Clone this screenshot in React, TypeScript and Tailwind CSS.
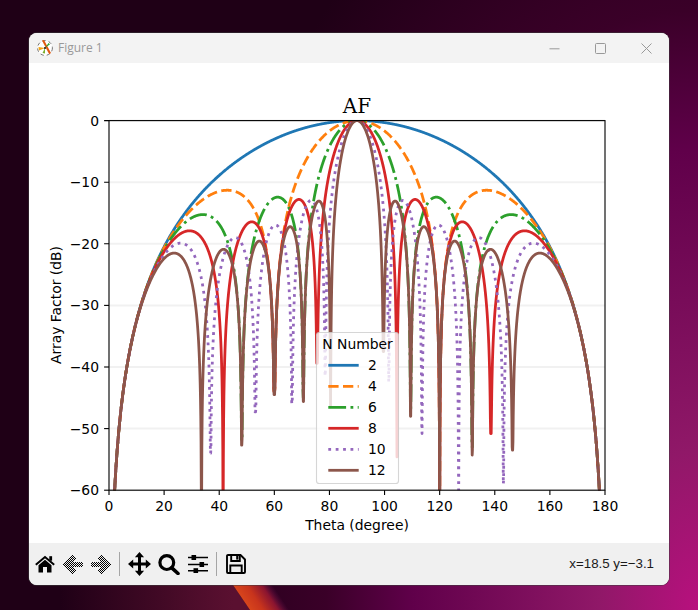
const AX = { left: 80, right: 576, top: 57.6, bottom: 427.2 };

const xPos = (t: number) => AX.left + (t / 180) * (AX.right - AX.left);
const yPos = (db: number) => AX.top + (-db / 60) * (AX.bottom - AX.top);

// sampling in the original leaves each null at its own depth, read off the plot
const series = [
  { n: 2, color: '#1f77b4', dash: undefined, floors: [] as number[][] },
  { n: 4, color: '#ff7f0e', dash: '10.3 4.4', floors: [[60, -44], [120, -70]] },
  { n: 6, color: '#2ca02c', dash: '17.8 4.4 2.8 4.4', floors: [[70.53, -45], [48.19, -52], [109.47, -47], [131.81, -53]] },
  { n: 8, color: '#d62728', dash: undefined, floors: [[75.52, -39.4], [60, -44], [41.41, -70], [104.48, -54.6], [120, -70], [138.59, -50.8]] },
  { n: 10, color: '#9467bd', dash: '2.8 4.6', floors: [[78.46, -41.5], [66.42, -46], [53.13, -47.3], [36.87, -54], [101.54, -42.4], [113.58, -50.8], [126.87, -70], [143.13, -59]] },
  { n: 12, color: '#8c564b', dash: undefined, floors: [[80.41, -46.5], [70.53, -45.6], [60, -44.5], [48.19, -52.7], [33.56, -70], [99.59, -37.5], [109.47, -48], [120, -70], [131.81, -54.3], [146.44, -53.5]] },
];

function arrayFactor(n: number, theta: number) {
  const psi = Math.PI * Math.cos((theta * Math.PI) / 180);
  const s = Math.sin(psi / 2);
  if (Math.abs(s) < 1e-9) return 1;
  return Math.abs(Math.sin((n * psi) / 2) / (n * s));
}

function curvePath(n: number, floors: number[][]) {
  let d = '';
  for (let i = 0; i <= 1800; i++) {
    const theta = i / 10;
    let db = 20 * Math.log10(Math.max(arrayFactor(n, theta), 1e-6));
    let floor = -70;
    for (const [t, f] of floors) {
      if (Math.abs(t - theta) < 3) floor = f;
    }
    db = Math.max(db, floor);
    d += `${i === 0 ? 'M' : 'L'}${xPos(theta).toFixed(2)} ${yPos(db).toFixed(2)}`;
  }
  return d;
}

function Plot() {
  const xTicks = [0, 20, 40, 60, 80, 100, 120, 140, 160, 180];
  const yTicks = [0, -10, -20, -30, -40, -50, -60];
  return (
    <svg width="640" height="480" viewBox="0 0 640 480" className="block font-['DejaVu_Sans',sans-serif] text-[13.9px]">
      <defs>
        <clipPath id="axes-clip">
          <rect x={AX.left} y={AX.top} width={AX.right - AX.left} height={AX.bottom - AX.top} />
        </clipPath>
      </defs>

      {/* grid */}
      {yTicks.map(v => (
        <line key={v} x1={AX.left} x2={AX.right} y1={yPos(v)} y2={yPos(v)} stroke="#b0b0b0" strokeOpacity="0.18" strokeWidth="2" />
      ))}

      {/* curves */}
      <g clipPath="url(#axes-clip)" fill="none" strokeWidth="2.78" strokeLinejoin="round">
        {series.map(s => (
          <path key={s.n} d={curvePath(s.n, s.floors)} stroke={s.color} strokeDasharray={s.dash} />
        ))}
      </g>

      {/* spines and ticks */}
      <rect x={AX.left} y={AX.top} width={AX.right - AX.left} height={AX.bottom - AX.top} fill="none" stroke="#000" strokeWidth="1.11" />
      {xTicks.map(v => (
        <g key={v}>
          <line x1={xPos(v)} x2={xPos(v)} y1={AX.bottom} y2={AX.bottom + 4.9} stroke="#000" strokeWidth="1.11" />
          <text x={xPos(v)} y="448" textAnchor="middle">{v}</text>
        </g>
      ))}
      {yTicks.map(v => (
        <g key={v}>
          <line x1={AX.left - 4.9} x2={AX.left} y1={yPos(v)} y2={yPos(v)} stroke="#000" strokeWidth="1.11" />
          <text x="70" y={yPos(v) + 5} textAnchor="end">{v === 0 ? '0' : `\u2212${-v}`}</text>
        </g>
      ))}

      {/* labels */}
      <text x="328" y="50" textAnchor="middle" className="font-['DejaVu_Serif',serif] text-[20px]">AF</text>
      <text x="328" y="467" textAnchor="middle">Theta (degree)</text>
      <text x="31.5" y="242" textAnchor="middle" transform="rotate(-90 31.5 242)">Array Factor (dB)</text>

      {/* legend */}
      <rect x="287.5" y="269.5" width="82" height="151" rx="2.8" fill="#fff" fillOpacity="0.8" stroke="#ccc" strokeOpacity="0.8" strokeWidth="1.11" />
      <text x="328.5" y="286" textAnchor="middle">N Number</text>
      {series.map((s, i) => (
        <g key={s.n}>
          <line x1="299.3" x2="329.7" y1={302.3 + i * 21} y2={302.3 + i * 21} stroke={s.color} strokeWidth="2.78" strokeDasharray={s.dash} />
          <text x="339" y={307.3 + i * 21}>{s.n}</text>
        </g>
      ))}
    </svg>
  );
}

function HomeIcon() {
  return (
    <svg width="20" height="18" viewBox="0 0 20 18">
      <path d="M0.8 9.8L10 2l9.2 7.8" fill="none" stroke="#000" strokeWidth="2" />
      <rect x="14.3" y="1.2" width="2.8" height="4.5" />
      <path d="M3.5 10.2L10 4.7l6.5 5.5V17.5H12V12H8v5.5H3.5Z" />
    </svg>
  );
}

function DitherArrow({ flip }: { flip?: boolean }) {
  const id = flip ? 'dither-r' : 'dither-l';
  return (
    <svg width="20" height="21" viewBox="0 0 20 21" shapeRendering="crispEdges" className={flip ? '-scale-x-100' : ''}>
      <defs>
        <pattern id={id} width="2" height="2" patternUnits="userSpaceOnUse">
          <rect width="1" height="1" />
          <rect x="1" y="1" width="1" height="1" />
        </pattern>
      </defs>
      <path d="M0 10.5L10 0.5l4.2 4.2L10 8h10v5H10l4.2 3.3L10 20.5Z" fill={`url(#${id})`} />
    </svg>
  );
}

function MoveIcon() {
  return (
    <svg width="23" height="24" viewBox="0 0 23 24">
      <path d="M11.5 4v16M4 12h15" stroke="#000" strokeWidth="3" />
      <path d="M11.5 0l4.6 5.2H6.9ZM11.5 24l4.6-5.2H6.9ZM0 12l5.2-4.6v9.2ZM23 12l-5.2-4.6v9.2Z" />
    </svg>
  );
}

function SearchIcon() {
  return (
    <svg width="22" height="21" viewBox="0 0 22 21">
      <circle cx="8.8" cy="8.6" r="6.9" fill="none" stroke="#000" strokeWidth="3.2" />
      <path d="M13.8 13.8L20 19.5" stroke="#000" strokeWidth="3.6" strokeLinecap="round" />
    </svg>
  );
}

function SlidersIcon() {
  return (
    <svg width="20" height="18" viewBox="0 0 20 18">
      <path d="M0 2.5h20M0 9.5h20M0 15.8h20" stroke="#000" strokeWidth="1.5" />
      <rect x="3.5" y="0" width="4.6" height="5" />
      <rect x="11.5" y="7" width="4.6" height="5" />
      <rect x="5.5" y="13.2" width="4.6" height="4.8" />
    </svg>
  );
}

function SaveIcon() {
  return (
    <svg width="20" height="20" viewBox="0 0 20 20" fill="none" stroke="#000" strokeWidth="1.9">
      <path d="M1 2a1 1 0 0 1 1-1h12.5L19 5.5V18a1 1 0 0 1-1 1H2a1 1 0 0 1-1-1Z" />
      <path d="M5.2 1.2V7h8.6V1.2" />
      <rect x="10.2" y="2" width="2.2" height="3.6" fill="#000" stroke="none" />
      <path d="M4.3 18.8V11.5h11.4v7.3" />
    </svg>
  );
}

function WindowLogo() {
  return (
    <svg width="18" height="18" viewBox="0 0 18 18">
      <circle cx="9" cy="9" r="7.4" fill="#fff" stroke="#666" strokeWidth="0.9" strokeDasharray="3.4 3" />
      <path d="M6 1.5L8 1l7 13-1.8 1.2Z" fill="#e2590f" />
      <path d="M2.5 8l6.5 1-6 2.5Z" fill="#f2a310" />
      <path d="M9 9l3.5-5 1.5 1.2Z" fill="#2ca02c" />
      <path d="M9 9l-2.5 5 2.5 0.5Z" fill="#7ab030" />
      <circle cx="9" cy="9" r="1.1" fill="#222" />
    </svg>
  );
}

export default function App() {
  return (
    <div className="relative w-[698px] h-[610px] overflow-hidden bg-[radial-gradient(ellipse_620px_1000px_at_100%_100%,#b8107e_0%,#901868_16%,#60004a_46%,#3a0028_60%,#1f0016_85%)] pl-[29px] pt-[33px]">
      {/* wallpaper streak */}
      <svg width="698" height="610" viewBox="0 0 698 610" className="absolute left-0 top-0">
        <defs>
          <linearGradient id="streak" x1="238" y1="598" x2="268" y2="578" gradientUnits="userSpaceOnUse">
            <stop offset="0" stopColor="#dc4a1c" />
            <stop offset="0.4" stopColor="#c8341c" />
            <stop offset="0.75" stopColor="#8a1430" />
            <stop offset="1" stopColor="#60104a" stopOpacity="0" />
          </linearGradient>
          <linearGradient id="glow" x1="60" y1="0" x2="233" y2="0" gradientUnits="userSpaceOnUse">
            <stop offset="0" stopColor="#5a1030" stopOpacity="0" />
            <stop offset="1" stopColor="#5a1030" />
          </linearGradient>
        </defs>
        <path d="M60 585H233L250 610H60Z" fill="url(#glow)" />
        <path d="M233 585H300V610H250Z" fill="url(#streak)" />
      </svg>

      <div className="relative w-[640px] h-[552px] flex flex-col rounded-lg overflow-hidden bg-white shadow-[0_0_0_1px_rgba(60,60,60,0.5)]">
        {/* title bar */}
        <div className="h-[30px] shrink-0 flex items-center bg-[#f3f3f3] pl-[7px]">
          <WindowLogo />
          <span className="ml-[4px] text-[12px] text-[#999] font-['Open_Sans',sans-serif]">Figure 1</span>
          <div className="ml-auto flex h-full">
            <div className="w-[46px] flex items-center justify-center">
              <svg width="11" height="11" viewBox="0 0 11 11"><path d="M0.5 5.8h10" stroke="#999" strokeWidth="1" /></svg>
            </div>
            <div className="w-[46px] flex items-center justify-center">
              <svg width="11" height="11" viewBox="0 0 11 11"><rect x="0.5" y="0.5" width="10" height="10" rx="1" fill="none" stroke="#999" /></svg>
            </div>
            <div className="w-[46px] flex items-center justify-center">
              <svg width="11" height="11" viewBox="0 0 11 11"><path d="M0.5 0.5l10 10M10.5 0.5l-10 10" stroke="#999" /></svg>
            </div>
          </div>
        </div>

        <Plot />

        {/* toolbar */}
        <div className="flex-1 flex items-center bg-[#f0f0f0] pl-[2px] pr-[15px]">
          <div className="w-[28px] flex justify-center"><HomeIcon /></div>
          <div className="w-[28px] flex justify-center"><DitherArrow /></div>
          <div className="w-[28px] flex justify-center"><DitherArrow flip /></div>
          <div className="ml-[4px] mr-[5px] w-px h-[24px] bg-[#a5a5a5]" />
          <div className="w-[29px] flex justify-center"><MoveIcon /></div>
          <div className="w-[29px] flex justify-center"><SearchIcon /></div>
          <div className="w-[29px] flex justify-center"><SlidersIcon /></div>
          <div className="ml-[4px] mr-[5px] w-px h-[24px] bg-[#a5a5a5]" />
          <div className="w-[28px] flex justify-center"><SaveIcon /></div>
          <span className="ml-auto text-[13.3px] text-[#1a1a1a] font-['Liberation_Sans',sans-serif]">x=18.5 y={'\u2212'}3.1</span>
        </div>
      </div>
    </div>
  );
}
